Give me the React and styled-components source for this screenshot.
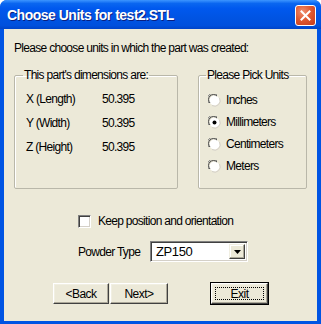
import React, { useState } from 'react';
import styled, { createGlobalStyle } from 'styled-components';

const GlobalStyle = createGlobalStyle`
  html, body {
    margin: 0;
    padding: 0;
    background: #ffffff;
  }
  * {
    box-sizing: border-box;
  }
`;

const FONT = '"Liberation Sans", Arial, sans-serif';

const Window = styled.div`
  width: 321px;
  height: 324px;
  display: flex;
  flex-direction: column;
  background: #0054e3;
  border-radius: 7px 7px 0 0;
  font-family: ${FONT};
  font-size: 12px;
  letter-spacing: -0.7px;
  color: #000;
  overflow: hidden;
  white-space: nowrap;
`;

const TitleBar = styled.div`
  height: 29px;
  flex: none;
  display: flex;
  align-items: center;
  justify-content: space-between;
  padding: 0 5px 0 7px;
  background: linear-gradient(
    to bottom,
    #3d95ff 0%,
    #0a66f0 12%,
    #0058ee 30%,
    #0054e3 60%,
    #0050dd 88%,
    #0044c8 100%
  );
`;

const Title = styled.span`
  color: #fff;
  font-weight: bold;
  font-size: 14px;
  letter-spacing: -0.5px;
  text-shadow: 1px 1px 0 #0a1f80;
  margin-top: 1px;
`;

const CloseButton = styled.button`
  width: 21px;
  height: 21px;
  padding: 0;
  border: 1px solid #fff;
  border-radius: 3px;
  background: radial-gradient(circle at 35% 30%, #f09072 0%, #e05a32 45%, #c4391b 100%);
  display: flex;
  align-items: center;
  justify-content: center;
  margin-top: 1px;
`;

const Client = styled.div`
  flex: 1;
  margin: 0 4px 3px 4px;
  background: #ece9d8;
  padding: 0 0 0 10px;
  display: flex;
  flex-direction: column;
`;

const Prompt = styled.div`
  line-height: 16px;
  margin-top: 11px;
`;

const GroupRow = styled.div`
  display: flex;
  gap: 20px;
  margin-top: 11px;
`;

const GroupBox = styled.fieldset`
  margin: 0;
  min-width: 0;
  width: ${(p) => p.$width}px;
  height: 122px;
  padding: 0;
  border: 1px solid #b9b7a9;
  border-radius: 2px;
  box-shadow: inset 1px 1px 0 #fff;
`;

const Legend = styled.legend`
  line-height: 16px;
  padding: 0 1px;
  margin-left: ${(p) => p.$offset}px;
`;

const GroupBody = styled.div`
  display: flex;
  flex-direction: column;
  padding: ${(p) => p.$padTop}px 0 0 ${(p) => p.$padLeft}px;
`;

const DimRow = styled.div`
  display: flex;
  height: 24px;
  align-items: center;
`;

const DimLabel = styled.span`
  width: 76px;
`;

const RadioRow = styled.label`
  display: flex;
  height: 22px;
  align-items: center;
  gap: 5px;
`;

const CheckRow = styled.label`
  display: flex;
  align-items: center;
  gap: 7px;
  height: 16px;
  margin-top: 24px;
  padding-left: 64px;
`;

const CheckBox = styled.span`
  width: 13px;
  height: 13px;
  background: #fff;
  border-top: 1px solid #808080;
  border-left: 1px solid #808080;
  border-right: 1px solid #fff;
  border-bottom: 1px solid #fff;
  box-shadow: inset 1px 1px 0 #404040, inset -1px -1px 0 #d4d0c8;
`;

const PowderRow = styled.div`
  display: flex;
  align-items: center;
  height: 21px;
  margin-top: 12px;
  padding-left: 64px;
`;

const PowderLabel = styled.span`
  width: 72px;
`;

const Combo = styled.div`
  width: 98px;
  height: 21px;
  display: flex;
  align-items: center;
  background: #fff;
  border-top: 1px solid #808080;
  border-left: 1px solid #808080;
  border-right: 1px solid #fff;
  border-bottom: 1px solid #fff;
  box-shadow: inset 1px 1px 0 #404040, inset -1px -1px 0 #d4d0c8;
  padding: 2px 2px 2px 5px;
`;

const ComboText = styled.span`
  flex: 1;
  font-size: 13px;
  letter-spacing: -0.4px;
`;

const DropButton = styled.span`
  width: 16px;
  height: 15px;
  background: #ece9d8;
  border-top: 1px solid #f1efe2;
  border-left: 1px solid #f1efe2;
  border-right: 1px solid #404040;
  border-bottom: 1px solid #404040;
  box-shadow: inset -1px -1px 0 #aca899, inset 1px 1px 0 #fff;
  display: flex;
  align-items: center;
  justify-content: center;
`;

const ButtonRow = styled.div`
  display: flex;
  align-items: center;
  margin-top: 21px;
  padding-left: 39px;
`;

const Button = styled.button`
  width: ${(p) => p.$width}px;
  height: 21px;
  margin-left: ${(p) => p.$gap || 0}px;
  padding: 0;
  font-family: ${FONT};
  font-size: 12px;
  letter-spacing: -0.5px;
  color: #000;
  background: #ece9d8;
  border-top: 1px solid #fff;
  border-left: 1px solid #fff;
  border-right: 1px solid #404040;
  border-bottom: 1px solid #404040;
  box-shadow: inset -1px -1px 0 #aca899, inset 1px 1px 0 #f1efe2;
  outline: ${(p) => (p.$default ? '1px solid #000' : 'none')};
  display: flex;
  align-items: center;
  justify-content: center;
`;

const FocusRect = styled.span`
  display: flex;
  align-items: center;
  justify-content: center;
  width: calc(100% - 6px);
  height: calc(100% - 6px);
  border: 1px dotted #000;
`;

function Radio({ checked }) {
  return (
    <svg width="13" height="13" viewBox="0 0 13 13">
      <path d="M1 9A5.5 5.5 0 0 1 9 1" fill="none" stroke="#808080" strokeWidth="1" />
      <circle cx="6.5" cy="6.5" r="5" fill="#fff" />
      <path d="M2 9A4.6 4.6 0 0 1 9 2" fill="none" stroke="#404040" strokeWidth="1" />
      <path d="M11.5 4A5.5 5.5 0 0 1 4 11.5" fill="none" stroke="#d4d0c8" strokeWidth="1" />
      {checked && <circle cx="6.5" cy="6.5" r="2" fill="#000" />}
    </svg>
  );
}

const units = ['Inches', 'Millimeters', 'Centimeters', 'Meters'];
const dims = [
  ['X (Length)', '50.395'],
  ['Y (Width)', '50.395'],
  ['Z (Height)', '50.395'],
];

export default function App() {
  const [unit, setUnit] = useState('Millimeters');

  return (
    <>
      <GlobalStyle />
      <Window>
        <TitleBar>
          <Title>Choose Units for test2.STL</Title>
          <CloseButton aria-label="Close">
            <svg width="11" height="11" viewBox="0 0 11 11">
              <path d="M1.5 1.5L9.5 9.5M9.5 1.5L1.5 9.5" stroke="#fff" strokeWidth="2" strokeLinecap="square" />
            </svg>
          </CloseButton>
        </TitleBar>
        <Client>
          <Prompt>Please choose units in which the part was created:</Prompt>
          <GroupRow>
            <GroupBox $width={164}>
              <Legend $offset={8}>This part's dimensions are:</Legend>
              <GroupBody $padTop={4} $padLeft={11}>
                {dims.map(([label, value]) => (
                  <DimRow key={label}>
                    <DimLabel>{label}</DimLabel>
                    <span>{value}</span>
                  </DimRow>
                ))}
              </GroupBody>
            </GroupBox>
            <GroupBox $width={109}>
              <Legend $offset={7}>Please Pick Units</Legend>
              <GroupBody $padTop={6} $padLeft={9}>
                {units.map((u) => (
                  <RadioRow key={u} onClick={() => setUnit(u)}>
                    <Radio checked={unit === u} />
                    <span>{u}</span>
                  </RadioRow>
                ))}
              </GroupBody>
            </GroupBox>
          </GroupRow>
          <CheckRow>
            <CheckBox />
            <span>Keep position and orientation</span>
          </CheckRow>
          <PowderRow>
            <PowderLabel>Powder Type</PowderLabel>
            <Combo>
              <ComboText>ZP150</ComboText>
              <DropButton>
                <svg width="7" height="4" viewBox="0 0 7 4">
                  <path d="M0 0H7L3.5 4Z" fill="#000" />
                </svg>
              </DropButton>
            </Combo>
          </PowderRow>
          <ButtonRow>
            <Button $width={56}>&lt;Back</Button>
            <Button $width={58} $gap={1}>Next&gt;</Button>
            <Button $width={57} $gap={43} $default>
              <FocusRect>Exit</FocusRect>
            </Button>
          </ButtonRow>
        </Client>
      </Window>
    </>
  );
}
